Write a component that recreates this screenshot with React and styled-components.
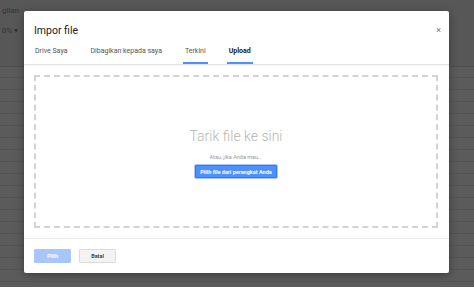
import React from "react";
import styled, { createGlobalStyle } from "styled-components";

const GlobalStyle = createGlobalStyle`
	html, body {
		margin: 0;
		padding: 0;
		width: 474px;
		height: 287px;
		overflow: hidden;
		font-family: Roboto, "Liberation Sans", Arial, sans-serif;
	}
`;

const Backdrop = styled.div`
	position: relative;
	width: 474px;
	height: 287px;
	background-color: #5b5b5b;
	background-image: repeating-linear-gradient(
		to bottom,
		transparent 0,
		transparent 11px,
		#535353 11px,
		#535353 12px
	);
	background-position: 0 66px;
	overflow: hidden;
`;

const SheetHeader = styled.div`
	height: 66px;
	background: #575757;
	border-bottom: 1px solid #4f4f4f;
	color: #333;
	font-size: 8px;
	padding-left: 2px;
`;

const MenuLine = styled.div`
	height: 20px;
	display: flex;
	align-items: center;
	gap: 10px;
`;

const Overlay = styled.div`
	position: absolute;
	inset: 0;
	display: flex;
	justify-content: center;
	padding-top: 11px;
	padding-right: 1px;
`;

const Modal = styled.div`
	width: 425px;
	height: 262px;
	background: #fff;
	border-radius: 2px;
	box-shadow: 0 2px 8px rgba(0, 0, 0, 0.35);
	display: flex;
	flex-direction: column;
`;

const Header = styled.div`
	display: flex;
	justify-content: space-between;
	align-items: center;
	padding: 9px 8px 0 10px;
	height: 20px;
`;

const Title = styled.h1`
	margin: 0;
	font-size: 10.5px;
	font-weight: 400;
	color: #222;
`;

const Close = styled.span`
	font-size: 9px;
	color: #777;
	line-height: 1;
`;

const Tabs = styled.div`
	display: flex;
	gap: 19px;
	padding: 0 9px;
	border-bottom: 1px solid #e5e5e5;
	box-shadow: 0 1px 2px rgba(0, 0, 0, 0.06);
`;

const Tab = styled.div`
	padding: 6px 2px 6px;
	line-height: 10px;
	font-size: 7px;
	color: ${({ active }) => (active ? "#222" : "#555")};
	font-weight: ${({ active }) => (active ? 700 : 400)};
	border-bottom: 2px solid ${({ underline }) => (underline ? "#4d90fe" : "transparent")};
`;

const Body = styled.div`
	flex: 1;
	padding: 10px 11px 10px 10px;
	border-bottom: 1px solid #ebebeb;
	display: flex;
`;

const DropZone = styled.div`
	flex: 1;
	border: 2px dashed #d3d3d3;
	display: flex;
	flex-direction: column;
	align-items: center;
	justify-content: center;
	padding-top: 2px;
`;

const DropTitle = styled.div`
	font-size: 14px;
	font-weight: 300;
	color: #b5b5b5;
	line-height: 18px;
`;

const DropHint = styled.div`
	font-size: 5.5px;
	color: #999;
	margin-top: 8px;
	line-height: 8px;
`;

const Button = styled.button`
	font-family: inherit;
	font-size: 5.5px;
	font-weight: 700;
	height: 14px;
	padding: 0 5px;
	border-radius: 1px;
	border: 1px solid ${({ variant }) =>
		variant === "primary" ? "#3079ed" : variant === "disabled" ? "#a9c6fa" : "#dcdcdc"};
	background: ${({ variant }) =>
		variant === "primary" ? "#4d90fe" : variant === "disabled" ? "#a9c6fa" : "#f3f3f3"};
	color: ${({ variant }) => (variant === "secondary" ? "#444" : "#fff")};
	min-width: ${({ wide }) => (wide ? "37px" : "auto")};
	cursor: pointer;
`;

const PickButton = styled(Button)`
	margin-top: 4px;
	height: 13px;
	padding: 0 4px;
	box-shadow: 0 0 0 1px #aac8fb;
`;

const Footer = styled.div`
	display: flex;
	gap: 8px;
	padding: 10px;
`;

export default function App() {
	return (
		<>
			<GlobalStyle />
			<Backdrop>
				<SheetHeader>
					<MenuLine>
						<span>gilan</span>
					</MenuLine>
					<MenuLine>
						<span>0% ▾</span>
					</MenuLine>
				</SheetHeader>
				<Overlay>
					<Modal>
						<Header>
							<Title>Impor file</Title>
							<Close>×</Close>
						</Header>
						<Tabs>
							<Tab>Drive Saya</Tab>
							<Tab>Dibagikan kepada saya</Tab>
							<Tab underline>Terkini</Tab>
							<Tab active underline>Upload</Tab>
						</Tabs>
						<Body>
							<DropZone>
								<DropTitle>Tarik file ke sini</DropTitle>
								<DropHint>Atau, jika Anda mau...</DropHint>
								<PickButton variant="primary">Pilih file dari perangkat Anda</PickButton>
							</DropZone>
						</Body>
						<Footer>
							<Button variant="disabled" wide>Pilih</Button>
							<Button variant="secondary" wide>Batal</Button>
						</Footer>
					</Modal>
				</Overlay>
			</Backdrop>
		</>
	);
}
